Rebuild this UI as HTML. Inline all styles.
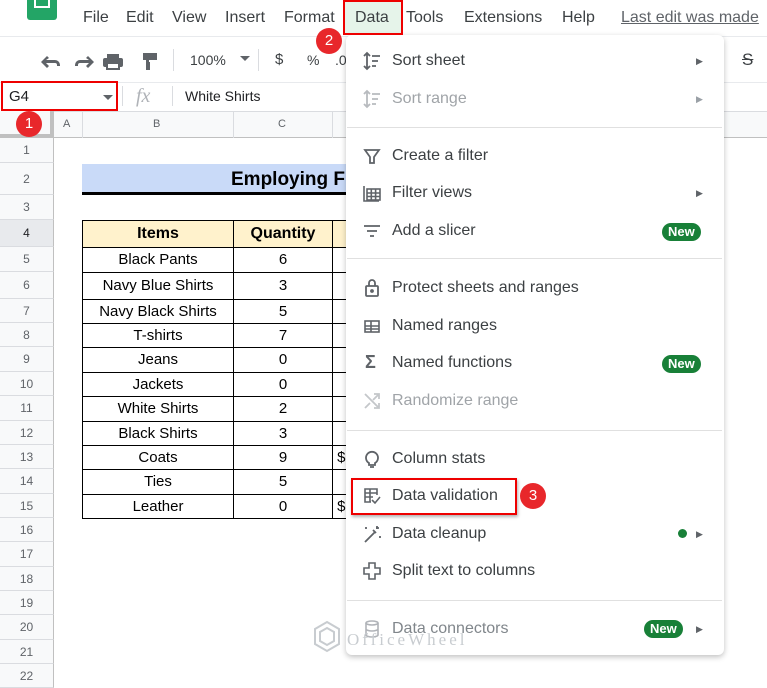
<!DOCTYPE html>
<html><head><meta charset="utf-8"><style>
*{margin:0;padding:0;box-sizing:border-box}
body{width:767px;height:677px;overflow:hidden;background:#fff;font-family:"Liberation Sans",Arial,sans-serif;position:relative;color:#202124}
.a{position:absolute}
.mb{font-size:16px;color:#3c4043;top:9px}
.rh{position:absolute;left:0;width:54px;background:#f8f9fa;border-bottom:1px solid #dadce0;border-right:1px solid #c0c0c0;color:#5f6368;font-size:12px;text-align:center}
.cell{position:absolute;border:1px solid #000;font-size:15px;text-align:center;color:#000}
.mi{position:absolute;left:392px;font-size:16px;color:#3c4043}
.dis{color:#a0a4a8}
.ic{position:absolute;left:362px;width:20px;height:20px}
.arr{position:absolute;left:696px;font-size:9px;color:#5f6368}
.new{position:absolute;background:#188038;color:#fff;font-weight:bold;font-size:13px;border-radius:9px;padding:1px 6px;height:18px;line-height:16px}
.sep{position:absolute;left:347px;width:375px;height:1px;background:#e0e0e0}
.badge{position:absolute;width:26px;height:26px;border-radius:50%;background:#e8272b;color:#fff;font-size:15px;text-align:center;line-height:26px}
.red{position:absolute;border:2.5px solid #e00}
</style></head><body>
<!-- logo -->
<div class="a" style="left:27px;top:-6px;width:30px;height:26px;background:#23a566;border-radius:3px"></div>
<div class="a" style="left:34px;top:0px;width:16px;height:8px;border:2px solid #fff;border-top:none"></div>
<span class="a mb" style="left:83px">File</span>
<span class="a mb" style="left:126px">Edit</span>
<span class="a mb" style="left:172px">View</span>
<span class="a mb" style="left:225px">Insert</span>
<span class="a mb" style="left:284px">Format</span>
<div class="a" style="left:345px;top:0;width:56px;height:34px;background:#e6f4ea"></div>
<span class="a mb" style="left:355px">Data</span>
<span class="a mb" style="left:406px">Tools</span>
<span class="a mb" style="left:464px">Extensions</span>
<span class="a mb" style="left:562px">Help</span>
<span class="a mb" style="left:621px;text-decoration:underline;color:#5f6368">Last edit was made</span>
<div class="a" style="left:0;top:36px;width:767px;height:1px;background:#e8eaed"></div>
<!-- toolbar -->
<svg class="a" style="left:40px;top:50px" width="130" height="22" viewBox="0 0 130 22" fill="#5f6368">
<path d="M4 10h9a5 5 0 015 5v1h-3v-1a2 2 0 00-2-2H4l3 3-2 2-6-6 6-6 2 2z" transform="translate(2,0)"/>
<path d="M22 10h-9a5 5 0 00-5 5v1h3v-1a2 2 0 012-2h9l-3 3 2 2 6-6-6-6-2 2z" transform="translate(27,0)"/>
<rect x="67" y="4" width="12" height="4"/><rect x="63" y="8" width="20" height="9" rx="2"/><rect x="67" y="13" width="12" height="6" fill="#fff" stroke="#5f6368" stroke-width="2"/>
<rect x="103" y="3" width="14" height="7"/><rect x="106" y="10" width="3" height="2"/><rect x="106" y="12" width="4" height="8"/>
</svg>
<div class="a" style="left:173px;top:49px;width:1px;height:22px;background:#dadce0"></div>
<span class="a" style="left:190px;top:52px;font-size:14px;color:#3c4043">100%</span>
<span class="a" style="left:240px;top:56px;border:5px solid transparent;border-top-color:#5f6368;border-bottom:none"></span>
<div class="a" style="left:258px;top:49px;width:1px;height:22px;background:#dadce0"></div>
<span class="a" style="left:275px;top:51px;font-size:15px;color:#3c4043">$</span>
<span class="a" style="left:307px;top:52px;font-size:14px;color:#3c4043">%</span>
<span class="a" style="left:335px;top:52px;font-size:14px;color:#3c4043">.0</span>
<span class="a" style="left:742px;top:50px;font-size:17px;color:#3c4043;text-decoration:line-through">S</span>
<div class="a" style="left:0;top:82px;width:767px;height:1px;background:#e8eaed"></div>
<!-- formula bar -->
<span class="a" style="left:9px;top:88px;font-size:15px">G4</span>
<span class="a" style="left:103px;top:95px;border:5px solid transparent;border-top-color:#5f6368;border-bottom:none"></span>
<div class="a" style="left:122px;top:86px;width:1px;height:20px;background:#dadce0"></div>
<span class="a" style="left:136px;top:85px;font-size:20px;font-style:italic;color:#b0b3b8;font-family:'Liberation Serif',serif">fx</span>
<div class="a" style="left:172px;top:86px;width:1px;height:20px;background:#dadce0"></div>
<span class="a" style="left:185px;top:88px;font-size:14px;color:#202124">White Shirts</span>
<div class="red" style="left:1px;top:81px;width:117px;height:30px"></div>
<!-- column headers -->
<div class="a" style="left:0;top:111px;width:767px;height:27px;background:#f8f9fa;border-top:1px solid #dadce0;border-bottom:1px solid #c0c0c0"></div>
<div class="a" style="left:0;top:111px;width:54px;height:27px;background:#f8f9fa;border-right:4px solid #c0c0c0;border-bottom:4px solid #c0c0c0"></div>
<div class="a" style="left:82px;top:111px;width:1px;height:27px;background:#dadce0"></div>
<div class="a" style="left:233px;top:111px;width:1px;height:27px;background:#dadce0"></div>
<div class="a" style="left:332px;top:111px;width:1px;height:27px;background:#dadce0"></div>
<span class="a" style="left:63px;top:118px;font-size:11px;color:#5f6368">A</span>
<span class="a" style="left:153px;top:118px;font-size:11px;color:#5f6368">B</span>
<span class="a" style="left:278px;top:118px;font-size:11px;color:#5f6368">C</span>
<!-- row headers -->
<div class="rh" style="top:138px;height:25px;line-height:25px">1</div>
<div class="rh" style="top:163px;height:32px;line-height:32px">2</div>
<div class="rh" style="top:195px;height:25px;line-height:25px">3</div>
<div class="rh" style="top:220px;height:27px;line-height:27px;background:#e8eaed;color:#202124">4</div>
<div class="rh" style="top:247px;height:25px;line-height:25px">5</div>
<div class="rh" style="top:272px;height:27px;line-height:27px">6</div>
<div class="rh" style="top:299px;height:24px;line-height:24px">7</div>
<div class="rh" style="top:323px;height:24px;line-height:24px">8</div>
<div class="rh" style="top:347px;height:25px;line-height:25px">9</div>
<div class="rh" style="top:372px;height:24px;line-height:24px">10</div>
<div class="rh" style="top:396px;height:25px;line-height:25px">11</div>
<div class="rh" style="top:421px;height:24px;line-height:24px">12</div>
<div class="rh" style="top:445px;height:24px;line-height:24px">13</div>
<div class="rh" style="top:469px;height:25px;line-height:25px">14</div>
<div class="rh" style="top:494px;height:24px;line-height:24px">15</div>
<div class="rh" style="top:518px;height:24px;line-height:24px">16</div>
<div class="rh" style="top:542px;height:25px;line-height:25px">17</div>
<div class="rh" style="top:567px;height:24px;line-height:24px">18</div>
<div class="rh" style="top:591px;height:24px;line-height:24px">19</div>
<div class="rh" style="top:615px;height:25px;line-height:25px">20</div>
<div class="rh" style="top:640px;height:24px;line-height:24px">21</div>
<div class="rh" style="top:664px;height:24px;line-height:24px">22</div>
<!-- title -->
<div class="a" style="left:82px;top:164px;width:270px;height:31px;background:#c9daf8;border-bottom:3px solid #000"></div>
<span class="a" style="left:231px;top:169px;font-size:19px;font-weight:bold;color:#000">Employing F</span>
<!-- table -->
<div class="cell" style="left:82px;top:220px;width:152px;height:28px;background:#fff2cc;font-weight:bold;font-size:16px;line-height:26px">Items</div>
<div class="cell" style="left:233px;top:220px;width:100px;height:28px;background:#fff2cc;font-weight:bold;font-size:16px;line-height:26px">Quantity</div>
<div class="cell" style="left:332px;top:220px;width:30px;height:28px;background:#fff2cc"></div>
<div class="cell" style="left:82px;top:247px;width:152px;height:26px;line-height:24px">Black Pants</div><div class="cell" style="left:233px;top:247px;width:100px;height:26px;line-height:24px">6</div><div class="cell" style="left:332px;top:247px;width:30px;height:26px"></div>
<div class="cell" style="left:82px;top:272px;width:152px;height:28px;line-height:26px">Navy Blue Shirts</div><div class="cell" style="left:233px;top:272px;width:100px;height:28px;line-height:26px">3</div><div class="cell" style="left:332px;top:272px;width:30px;height:28px"></div>
<div class="cell" style="left:82px;top:299px;width:152px;height:25px;line-height:23px">Navy Black Shirts</div><div class="cell" style="left:233px;top:299px;width:100px;height:25px;line-height:23px">5</div><div class="cell" style="left:332px;top:299px;width:30px;height:25px"></div>
<div class="cell" style="left:82px;top:323px;width:152px;height:25px;line-height:23px">T-shirts</div><div class="cell" style="left:233px;top:323px;width:100px;height:25px;line-height:23px">7</div><div class="cell" style="left:332px;top:323px;width:30px;height:25px"></div>
<div class="cell" style="left:82px;top:347px;width:152px;height:26px;line-height:24px">Jeans</div><div class="cell" style="left:233px;top:347px;width:100px;height:26px;line-height:24px">0</div><div class="cell" style="left:332px;top:347px;width:30px;height:26px"></div>
<div class="cell" style="left:82px;top:372px;width:152px;height:25px;line-height:23px">Jackets</div><div class="cell" style="left:233px;top:372px;width:100px;height:25px;line-height:23px">0</div><div class="cell" style="left:332px;top:372px;width:30px;height:25px"></div>
<div class="cell" style="left:82px;top:396px;width:152px;height:26px;line-height:24px">White Shirts</div><div class="cell" style="left:233px;top:396px;width:100px;height:26px;line-height:24px">2</div><div class="cell" style="left:332px;top:396px;width:30px;height:26px"></div>
<div class="cell" style="left:82px;top:421px;width:152px;height:25px;line-height:23px">Black Shirts</div><div class="cell" style="left:233px;top:421px;width:100px;height:25px;line-height:23px">3</div><div class="cell" style="left:332px;top:421px;width:30px;height:25px"></div>
<div class="cell" style="left:82px;top:445px;width:152px;height:25px;line-height:23px">Coats</div><div class="cell" style="left:233px;top:445px;width:100px;height:25px;line-height:23px">9</div><div class="cell" style="left:332px;top:445px;width:30px;height:25px;text-align:left;line-height:23px">&nbsp;$</div>
<div class="cell" style="left:82px;top:469px;width:152px;height:26px;line-height:24px">Ties</div><div class="cell" style="left:233px;top:469px;width:100px;height:26px;line-height:24px">5</div><div class="cell" style="left:332px;top:469px;width:30px;height:26px"></div>
<div class="cell" style="left:82px;top:494px;width:152px;height:25px;line-height:23px">Leather</div><div class="cell" style="left:233px;top:494px;width:100px;height:25px;line-height:23px">0</div><div class="cell" style="left:332px;top:494px;width:30px;height:25px;text-align:left;line-height:23px">&nbsp;$</div>
<!-- menu -->
<div class="a" style="left:346px;top:35px;width:378px;height:620px;background:#fff;border-radius:6px;box-shadow:0 2px 6px rgba(0,0,0,.25)"></div>
<div class="red" style="left:343px;top:0px;width:60px;height:35px"></div>
<svg class="ic" style="top:51px" viewBox="0 0 20 20" fill="none" stroke="#5f6368" stroke-width="1.8"><path d="M5 2v16M2 5l3-3 3 3M2 15l3 3 3-3M10 5h8M10 10h6M10 15h4"/></svg>
<span class="mi" style="top:52px">Sort sheet</span><span class="arr" style="top:56px">▶</span>
<svg class="ic" style="top:89px" viewBox="0 0 20 20" fill="none" stroke="#b8bbbf" stroke-width="1.8"><path d="M5 2v16M2 5l3-3 3 3M2 15l3 3 3-3M10 5h8M10 10h6M10 15h4"/></svg>
<span class="mi dis" style="top:90px">Sort range</span><span class="arr" style="top:94px;color:#9aa0a6">▶</span>
<div class="sep" style="top:127px"></div>
<svg class="ic" style="top:146px" viewBox="0 0 20 20" fill="none" stroke="#5f6368" stroke-width="1.8"><path d="M3 4h14l-5 7v6h-4v-6z"/></svg>
<span class="mi" style="top:147px">Create a filter</span>
<svg class="ic" style="top:183px" viewBox="0 0 20 20" fill="none" stroke="#5f6368" stroke-width="1.6"><path d="M2 3v15h15"/><rect x="5" y="6" width="13" height="11"/><path d="M5 10h13M5 13.5h13M9.3 6v11M13.6 6v11"/></svg>
<span class="mi" style="top:184px">Filter views</span><span class="arr" style="top:188px">▶</span>
<svg class="ic" style="top:221px" viewBox="0 0 20 20" fill="none" stroke="#5f6368" stroke-width="1.8"><path d="M2 5h16M5 10h10M8 15h4"/></svg>
<span class="mi" style="top:222px">Add a slicer</span><span class="new" style="left:662px;top:223px">New</span>
<div class="sep" style="top:258px"></div>
<svg class="ic" style="top:278px" viewBox="0 0 20 20" fill="none" stroke="#5f6368" stroke-width="1.8"><rect x="4" y="8" width="12" height="10" rx="1"/><path d="M7 8V5a3 3 0 016 0v3"/><circle cx="10" cy="13" r="1" fill="#5f6368"/></svg>
<span class="mi" style="top:279px">Protect sheets and ranges</span>
<svg class="ic" style="top:316px" viewBox="0 0 20 20" fill="none" stroke="#5f6368" stroke-width="1.6"><rect x="3" y="5" width="14" height="11"/><path d="M3 10h14M3 13h14M9 5v11"/></svg>
<span class="mi" style="top:317px">Named ranges</span>
<span class="a" style="left:365px;top:352px;font-size:18px;font-weight:bold;color:#5f6368">Σ</span>
<span class="mi" style="top:354px">Named functions</span><span class="new" style="left:662px;top:355px">New</span>
<svg class="ic" style="top:391px" viewBox="0 0 20 20" fill="none" stroke="#c4c7ca" stroke-width="1.8"><path d="M3 3l14 14M12 17h5v-5M12 3h5v5M17 3L11 9M3 17l5-5"/></svg>
<span class="mi dis" style="top:392px">Randomize range</span>
<div class="sep" style="top:430px"></div>
<svg class="ic" style="top:449px" viewBox="0 0 20 20" fill="none" stroke="#5f6368" stroke-width="1.8"><path d="M7 14a6 6 0 116 0v2H7zM8 18h4"/></svg>
<span class="mi" style="top:450px">Column stats</span>
<svg class="ic" style="top:486px" viewBox="0 0 20 20" fill="none" stroke="#5f6368" stroke-width="1.6"><path d="M15 9V3H3v13h6M3 7h12M3 11h8M8 3v13M10 14l3 3 5-6"/></svg>
<span class="mi" style="top:487px">Data validation</span>
<div class="red" style="left:351px;top:478px;width:166px;height:37px;box-shadow:1px 2px 3px rgba(0,0,0,.3)"></div>
<svg class="ic" style="top:524px" viewBox="0 0 20 20" fill="none" stroke="#5f6368" stroke-width="1.8"><path d="M3 18L13 8M11 6l3 3M15 2v3M17 4h-3M18 12v2M4 3v2"/></svg>
<span class="mi" style="top:525px">Data cleanup</span>
<div class="a" style="left:678px;top:529px;width:9px;height:9px;border-radius:50%;background:#188038"></div><span class="arr" style="top:529px">▶</span>
<svg class="ic" style="top:561px" viewBox="0 0 20 20" fill="none" stroke="#5f6368" stroke-width="1.6"><path d="M7 2h6v5h5v6h-5v5H7v-5H2V7h5z"/></svg>
<span class="mi" style="top:562px">Split text to columns</span>
<div class="sep" style="top:600px"></div>
<svg class="ic" style="top:619px" viewBox="0 0 20 20" fill="none" stroke="#b0b3b8" stroke-width="1.6"><ellipse cx="10" cy="4" rx="6" ry="2"/><path d="M4 4v12c0 1 3 2 6 2s6-1 6-2V4M4 10c0 1 3 2 6 2s6-1 6-2"/></svg>
<span class="mi" style="top:620px;color:#80868b">Data connectors</span><span class="new" style="left:644px;top:620px">New</span><span class="arr" style="top:624px">▶</span>
<!-- watermark -->
<svg class="a" style="left:312px;top:620px" width="30" height="34" viewBox="0 0 30 34" fill="none" stroke="#c8ccd0" stroke-width="2"><path d="M15 2l12 7v15l-12 7-12-7V9z"/><path d="M15 8l7 4v9l-7 4-7-4v-9z"/></svg>
<span class="a" style="left:347px;top:630px;font-size:17px;letter-spacing:3px;color:#c8ccd0;font-family:'Liberation Serif',serif">OfficeWheel</span>
<!-- badges -->
<div class="badge" style="left:16px;top:111px">1</div>
<div class="badge" style="left:316px;top:28px">2</div>
<div class="badge" style="left:520px;top:483px">3</div>
</body></html>
